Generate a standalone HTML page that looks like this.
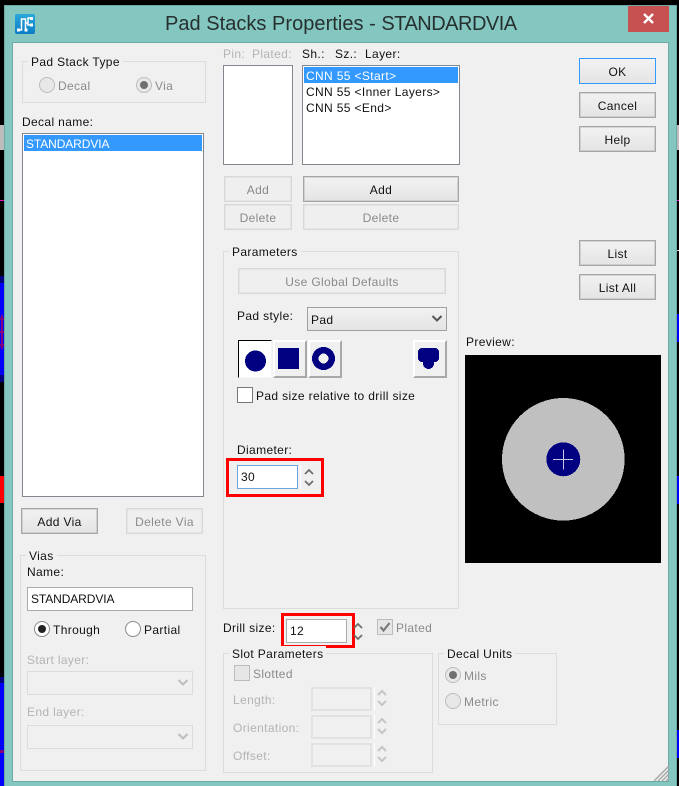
<!DOCTYPE html>
<html><head><meta charset="utf-8"><title>Pad Stacks Properties</title>
<style>
html,body{margin:0;padding:0;background:#000;}
#p{position:relative;width:679px;height:786px;overflow:hidden;background:#000;font:12px "Liberation Sans",sans-serif;letter-spacing:.36px;color:#111;}
#p div,#p span,#p svg{position:absolute;box-sizing:border-box;}
.t{white-space:nowrap;line-height:16px;height:16px;margin-top:1px;}
.d{color:#8a8a8a;}
.l{color:#b4b4b4;}
.g{border:1px solid #dcdcdc;}
.leg{background:#f0f0f0;padding:0 3px;white-space:nowrap;line-height:16px;height:16px;margin-top:1px;}
.b{border:1px solid #a6a6a6;box-shadow:inset 0 0 0 1px rgba(170,170,170,.4);background:linear-gradient(#f2f2f2,#e4e4e4);text-align:center;line-height:26px;white-space:nowrap;}
.x{border:1px solid #d8d8d8;box-shadow:inset 0 0 0 1px rgba(220,220,220,.5);background:#efefef;color:#8a8a8a;text-align:center;line-height:26px;white-space:nowrap;}
.lst{border:1.500px solid #828790;background:#fff;}
.sel{background:#3399ff;color:#fff;line-height:18px;white-space:nowrap;}
.i{background:#fff;border:1.500px solid #ababab;line-height:23px;padding-left:3px;}
.di{background:#f0f0f0;border:2px solid #e2e2e2;}
.pb{background:#f0f0f0;border:2px solid;border-color:#fff #a8a8a8 #a8a8a8 #fff;}
.r{width:16px;height:16px;border-radius:50%;border:1.500px solid #8a8a8a;background:#fff;}
.rd{width:16px;height:16px;border-radius:50%;border:1.500px solid #bcbcbc;background:#e8e8e8;}
.dot{width:8px;height:8px;left:3px;top:3px;border-radius:50%;}
.u{letter-spacing:-.1px;}
</style></head><body><div id="p">

<!-- background strips -->
<div style="left:0;top:125px;width:4px;height:25px;background:#bdbdbd"></div>
<div style="left:0;top:200px;width:4px;height:1px;background:#e010c0"></div>
<div style="left:0;top:276px;width:4px;height:106px;background:#000080"></div>
<div style="left:0;top:283px;width:4px;height:92px;background:#0000ff"></div>
<div style="left:1px;top:315px;width:2px;height:34px;background:#800080"></div>
<div style="left:0;top:318px;width:4px;height:2px;background:#800080"></div>
<div style="left:0;top:331px;width:4px;height:2px;background:#800080"></div>
<div style="left:0;top:344px;width:4px;height:2px;background:#800080"></div>
<div style="left:0;top:476px;width:4px;height:27px;background:#ff0000"></div>
<div style="left:0;top:677px;width:4px;height:109px;background:#000080"></div>
<div style="left:0;top:683px;width:4px;height:103px;background:#0000ff"></div>
<div style="left:0;top:750px;width:4px;height:3px;background:#800080"></div>
<div style="left:677px;top:125px;width:2px;height:25px;background:#bdbdbd"></div>
<div style="left:677px;top:200px;width:2px;height:1px;background:#e010c0"></div>
<div style="left:677px;top:250px;width:2px;height:1px;background:#ddd"></div>
<div style="left:677px;top:314px;width:2px;height:28px;background:#0000ff"></div>
<div style="left:677px;top:476px;width:2px;height:28px;background:#0000ff"></div>
<div style="left:677px;top:730px;width:2px;height:28px;background:#0000ff"></div>

<!-- window -->
<div style="left:4px;top:5px;width:673px;height:781px;background:#84c6c0;border:1px solid #6fa9a5;border-bottom:0"></div>
<div style="left:628px;top:6px;width:41px;height:26px;background:#c75050"></div>
<svg style="left:628px;top:6px" width="41" height="26"><path d="M16 8l9 9M25 8l-9 9" stroke="#fff" stroke-width="2.400" fill="none"/></svg>
<svg style="left:15px;top:14px" width="20" height="20"><defs><linearGradient id="ig" x1="0" y1="0" x2="0" y2="1"><stop offset="0" stop-color="#2aa7dc"/><stop offset="1" stop-color="#0b7cc4"/></linearGradient></defs><rect width="20" height="20" rx="2" fill="url(#ig)"/><path d="M3 16h3.500V5h4v11M11 9h2V4h3.500M13 9v2h3" stroke="#fff" stroke-width="1.500" fill="none"/><rect x="2" y="14.500" width="3" height="3" fill="#fff"/><rect x="9.500" y="14.500" width="3" height="3" fill="#fff"/><rect x="15" y="3" width="3" height="3" fill="#fff"/><rect x="15" y="9.500" width="3" height="3" fill="#fff"/></svg>
<div class="t" style="left:165px;top:11px;height:24px;line-height:24px;font-size:20px;letter-spacing:.03px;color:#26302f">Pad Stacks Properties - <span style="position:static;letter-spacing:-.5px">STANDARDVIA</span></div>

<div style="left:12px;top:42px;width:657px;height:740px;background:#f0f0f0;border:1px solid #6fa9a5"></div>

<!-- Pad stack type -->
<div class="g" style="left:22px;top:61px;width:184px;height:42px"></div>
<div class="leg" style="left:28px;top:53px">Pad Stack Type</div>
<div class="rd" style="left:39px;top:77px"></div>
<div class="t d" style="left:58px;top:77px">Decal</div>
<div class="rd" style="left:136px;top:77px"><span class="dot" style="background:#707070"></span></div>
<div class="t d" style="left:155px;top:77px">Via</div>

<!-- Decal name -->
<div class="t" style="left:22px;top:113px">Decal name:</div>
<div class="lst" style="left:22px;top:133px;width:182px;height:364px"></div>
<div class="sel u" style="left:24px;top:135px;width:178px;height:16px;padding-left:2px">STANDARDVIA</div>
<div class="b" style="left:21px;top:508px;width:77px;height:26px">Add Via</div>
<div class="x" style="left:126px;top:508px;width:77px;height:26px">Delete Via</div>

<!-- Vias -->
<div class="g" style="left:20px;top:555px;width:186px;height:216px"></div>
<div class="leg" style="left:26px;top:547px">Vias</div>
<div class="t" style="left:27px;top:563px">Name:</div>
<div class="i u" style="left:27px;top:587px;width:166px;height:24px">STANDARDVIA</div>
<div class="r" style="left:34px;top:621px"><span class="dot" style="background:#222"></span></div>
<div class="t" style="left:53px;top:621px">Through</div>
<div class="r" style="left:125px;top:621px"></div>
<div class="t" style="left:144px;top:621px">Partial</div>
<div class="t l" style="left:27px;top:651px">Start layer:</div>
<div class="g" style="left:27px;top:671px;width:166px;height:24px"></div>
<svg style="left:177px;top:678px" width="12" height="10"><path d="M1.500 2l4.500 4.500 4.500-4.500" stroke="#bdbdbd" stroke-width="2" fill="none"/></svg>
<div class="t l" style="left:27px;top:703px">End layer:</div>
<div class="g" style="left:27px;top:725px;width:166px;height:24px"></div>
<svg style="left:177px;top:732px" width="12" height="10"><path d="M1.500 2l4.500 4.500 4.500-4.500" stroke="#bdbdbd" stroke-width="2" fill="none"/></svg>

<!-- Top middle -->
<div class="t l" style="left:223px;top:45px">Pin:</div>
<div class="t l" style="left:252px;top:45px">Plated:</div>
<div class="t" style="left:302px;top:45px">Sh.:</div>
<div class="t" style="left:335px;top:45px">Sz.:</div>
<div class="t" style="left:365px;top:45px">Layer:</div>
<div class="lst" style="left:223px;top:65px;width:70px;height:100px"></div>
<div class="lst" style="left:302px;top:65px;width:158px;height:100px"></div>
<div class="sel" style="left:304px;top:67px;width:154px;height:16px;padding-left:2px">CNN 55 &lt;Start&gt;</div>
<div class="t" style="left:306px;top:83px">CNN 55 &lt;Inner Layers&gt;</div>
<div class="t" style="left:306px;top:99px">CNN 55 &lt;End&gt;</div>
<div class="x" style="left:224px;top:176px;width:68px;height:26px">Add</div>
<div class="b" style="left:303px;top:176px;width:156px;height:26px">Add</div>
<div class="x" style="left:224px;top:204px;width:68px;height:26px">Delete</div>
<div class="x" style="left:303px;top:204px;width:156px;height:26px">Delete</div>

<!-- Right buttons -->
<div class="b" style="left:579px;top:58px;width:77px;height:26px;border-color:#3399ff;box-shadow:none">OK</div>
<div class="b" style="left:579px;top:92px;width:77px;height:26px">Cancel</div>
<div class="b" style="left:579px;top:126px;width:77px;height:26px">Help</div>
<div class="b" style="left:579px;top:240px;width:77px;height:26px">List</div>
<div class="b" style="left:579px;top:274px;width:77px;height:26px">List All</div>

<!-- Preview -->
<div class="t" style="left:466px;top:333px">Preview:</div>
<svg style="left:465px;top:355px" width="196" height="208" shape-rendering="crispEdges"><rect width="196" height="208" fill="#000"/><circle cx="98.300" cy="104.300" r="61.300" fill="#c0c0c0"/><circle cx="98.300" cy="104.300" r="17" fill="#000080"/><path d="M88 104.500h20M98.500 94.500v20" stroke="#c8c8e0" stroke-width="1"/></svg>

<!-- Parameters -->
<div class="g" style="left:223px;top:251px;width:236px;height:358px"></div>
<div class="leg" style="left:229px;top:243px">Parameters</div>
<div class="x" style="left:238px;top:268px;width:208px;height:26px">Use Global Defaults</div>
<div class="t" style="left:237px;top:307px">Pad style:</div>
<div class="b" style="left:307px;top:307px;width:140px;height:24px;text-align:left;padding-left:3px;line-height:24px;border-color:#a0a0a0;box-shadow:none">Pad</div>
<svg style="left:431px;top:314px" width="12" height="10"><path d="M1.500 2l4.500 4.500 4.500-4.500" stroke="#555" stroke-width="2" fill="none"/></svg>

<div style="left:238px;top:340px;width:34px;height:38px;background:#fff;border:1.500px solid;border-color:#000 #f4f4f4 #f4f4f4 #000"></div>
<div class="pb" style="left:273px;top:340px;width:34px;height:38px"></div>
<div class="pb" style="left:308px;top:340px;width:34px;height:38px"></div>
<div class="pb" style="left:413px;top:340px;width:34px;height:38px"></div>
<svg style="left:238px;top:340px" width="210" height="38" shape-rendering="crispEdges">
<circle cx="17.500" cy="21" r="10.500" fill="#000080"/>
<rect x="40" y="8" width="21" height="21" fill="#000080"/>
<circle cx="85.500" cy="18.500" r="8.250" fill="none" stroke="#000080" stroke-width="6.500"/>
<rect x="180" y="8" width="21" height="14" rx="4" fill="#000080"/>
<circle cx="190.500" cy="23.500" r="5.500" fill="#000080"/>
</svg>
<div style="left:237px;top:387px;width:16px;height:16px;background:#fff;border:1.500px solid #777"></div>
<div class="t" style="left:256px;top:387px">Pad size relative to drill size</div>

<div class="t" style="left:237px;top:441px">Diameter:</div>
<div style="left:226px;top:458px;width:98px;height:39px;border:3px solid #f00"></div>
<div class="i" style="left:237px;top:465px;width:61px;height:24px;border-color:#6aa5de">30</div>
<div style="left:300px;top:465px;width:1px;height:24px;background:#fff"></div>
<svg style="left:303px;top:468px" width="12" height="20"><path d="M2 6l4-4 4 4M2 13l4 4 4-4" stroke="#6e6e6e" stroke-width="1.800" fill="none"/></svg>

<!-- Drill -->
<div class="t" style="left:223px;top:619px">Drill size:</div>
<div style="left:281px;top:613px;width:74px;height:35px;border:3px solid #f00"></div>
<div class="i" style="left:286px;top:619px;width:61px;height:24px">12</div>
<svg style="left:352px;top:622px" width="12" height="20"><path d="M2 6l4-4 4 4M2 13l4 4 4-4" stroke="#6e6e6e" stroke-width="1.800" fill="none"/></svg>
<div style="left:377px;top:619px;width:16px;height:16px;background:#e6e6e6;border:1.500px solid #bcbcbc"></div>
<svg style="left:377px;top:619px" width="16" height="16"><path d="M3.500 8l3 3.500 6-7.500" stroke="#7a7a7a" stroke-width="2.200" fill="none"/></svg>
<div class="t d" style="left:396px;top:619px">Plated</div>

<!-- Slot -->
<div class="g" style="left:223px;top:653px;width:210px;height:120px"></div>
<div class="leg" style="left:229px;top:645px">Slot Parameters</div>
<div style="left:234px;top:665px;width:16px;height:16px;background:#e6e6e6;border:1.500px solid #bcbcbc"></div>
<div class="t d" style="left:253px;top:665px">Slotted</div>
<div class="t l" style="left:233px;top:691px">Length:</div>
<div class="t l" style="left:233px;top:719px">Orientation:</div>
<div class="t l" style="left:233px;top:747px">Offset:</div>
<div class="di" style="left:311px;top:687px;width:61px;height:24px"></div>
<div class="di" style="left:311px;top:715px;width:61px;height:24px"></div>
<div class="di" style="left:311px;top:743px;width:61px;height:24px"></div>
<svg style="left:374px;top:687px" width="14" height="82"><path d="M.500 0v24M.500 28v24M.500 56v24" stroke="#fff"/><path d="M4 8l4-4 4 4M4 14l4 4 4-4M4 36l4-4 4 4M4 42l4 4 4-4M4 64l4-4 4 4M4 70l4 4 4-4" stroke="#c4c4c4" stroke-width="2" fill="none"/></svg>

<!-- Decal units -->
<div class="g" style="left:438px;top:653px;width:119px;height:72px"></div>
<div class="leg" style="left:444px;top:645px">Decal Units</div>
<div class="rd" style="left:445px;top:667px"><span class="dot" style="background:#707070"></span></div>
<div class="t d" style="left:464px;top:667px">Mils</div>
<div class="rd" style="left:445px;top:693px"></div>
<div class="t d" style="left:464px;top:693px">Metric</div>

<!-- Grip -->
<svg style="left:654px;top:766px" width="15" height="15"><path d="M0 15L15 0M4 15L15 4M8 15L15 8M12 15L15 12" stroke="#a8a8a8" stroke-width="1.500" fill="none"/></svg>

</div></body></html>
